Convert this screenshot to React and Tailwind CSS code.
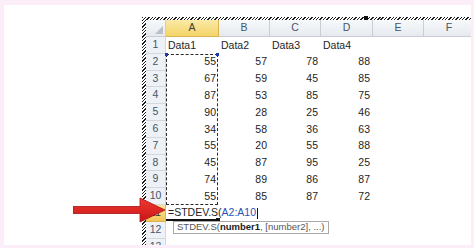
import React from 'react'

const hatch = 'bg-[repeating-linear-gradient(135deg,#1c1c1c_0px,#1c1c1c_1px,#ffffff_1px,#ffffff_2.4px)]'

const cols = ['A', 'B', 'C', 'D', 'E', 'F']

const data = [
  ['Data1', 'Data2', 'Data3', 'Data4'],
  [55, 57, 78, 88],
  [67, 59, 45, 85],
  [87, 53, 85, 75],
  [90, 28, 25, 46],
  [34, 58, 36, 63],
  [55, 20, 55, 88],
  [45, 87, 95, 25],
  [74, 89, 86, 87],
  [55, 85, 87, 72],
]

function HeaderCell({ children, active }) {
  return (
    <div
      className={
        'flex h-[17px] items-center justify-center border-r border-b text-[10.5px] ' +
        (active
          ? 'border-[#dcb352] bg-linear-to-b from-[#fbeaa6] to-[#f4d466] text-[#3c3c3c]'
          : 'border-[#c9ced6] bg-linear-to-b from-[#f7f9fb] to-[#e6eaef] text-[#44556b]')
      }
    >
      {children}
    </div>
  )
}

function RowHead({ n, active }) {
  return (
    <div
      className={
        'flex h-[16.8px] items-center justify-center border-r border-b text-[10.5px] ' +
        (active
          ? 'border-[#dcb352] bg-linear-to-b from-[#fbe79a] to-[#f2c553] text-[#333]'
          : 'border-[#d3d8df] bg-[#eef1f5] text-[#44556b]')
      }
    >
      {n}
    </div>
  )
}

function Cell({ value }) {
  const isText = typeof value === 'string'
  return (
    <div
      className={
        'flex h-[16.8px] items-center whitespace-nowrap text-[10.5px] text-[#1e1e1e] ' +
        (isText ? 'justify-start pl-[2px]' : 'justify-end pr-[3px]')
      }
    >
      {value}
    </div>
  )
}

export default function App() {
  return (
    <div
      className="h-[248px] w-[474px] bg-[#fbeef9] pt-[5px] pr-[3px] pb-[3px] pl-[4px]"
      style={{ fontFamily: '"Liberation Sans", Arial, sans-serif' }}
    >
      <div className="relative h-full overflow-hidden bg-white pt-[12px] pl-[138px]">
        <div className="flex h-full flex-col">
          <div className={`relative h-[3px] shrink-0 ${hatch}`}>
            <div className="absolute top-[-1px] left-[222px] h-[4px] w-[4px] bg-[#111]" />
          </div>
          <div className="flex flex-1 overflow-hidden">
            <div className={`w-[4px] shrink-0 ${hatch}`} />
            <div className="relative flex-1">
              <div className="grid grid-cols-[20px_53px_51px_51px_52px_51px_51px]">
                <div className="relative h-[17px] border-r border-b border-[#c9ced6] bg-linear-to-b from-[#f7f9fb] to-[#e6eaef]">
                  <svg className="absolute right-[2px] bottom-[2px]" width="8" height="8" viewBox="0 0 8 8">
                    <polygon points="8,0 8,8 0,8" fill="#b9c0c9" />
                  </svg>
                </div>
                {cols.map((c, i) => (
                  <HeaderCell key={c} active={i === 0}>{c}</HeaderCell>
                ))}

                {data.map((row, r) => (
                  <React.Fragment key={r}>
                    <RowHead n={r + 1} />
                    {row.map((v, ci) => (
                      <Cell key={ci} value={v} />
                    ))}
                    <div />
                    <div />
                  </React.Fragment>
                ))}

                <RowHead n={11} active />
                <div className="relative col-span-6 flex h-[16.8px] items-center pl-[2px] text-[10.5px] whitespace-nowrap text-[#1e1e1e]">
                  <span>=STDEV.S(</span>
                  <span className="text-[#2f4fb5]">A2:A10</span>
                  <span className="ml-[1px] inline-block h-[11px] w-[1px] bg-[#111]" />
                </div>

                <RowHead n={12} />
                <div className="col-span-6" />
                <RowHead n={13} />
                <div className="col-span-6" />
              </div>

              {/* copy marquee around A2:A10 */}
              <div className="absolute top-[33.8px] left-[20px] h-[151.2px] w-[52px] border border-dashed border-[#2a2a2a]">
                <div className="absolute top-[-2px] left-[-2px] h-[3px] w-[3px] bg-[#2038a8]" />
                <div className="absolute top-[-2px] right-[-2px] h-[3px] w-[3px] bg-[#2038a8]" />
              </div>

              {/* active cell bottom edge + fill handle */}
              <div className="absolute top-[199px] left-[20px] h-[2px] w-[52px] bg-[#111]" />
              <div className="absolute top-[198px] left-[70px] h-[4px] w-[4px] bg-[#111]" />

              {/* function tooltip */}
              <div className="absolute top-[201px] left-[27px] flex h-[13px] items-center border border-[#a9a9a9] bg-white px-[3px] text-[9.5px] whitespace-nowrap text-[#555]">
                STDEV.S(<span className="font-bold text-[#222]">number1</span>, [number2], ...)
              </div>
            </div>
          </div>
        </div>

        {/* red arrow */}
        <svg className="absolute top-[192px] left-[69px]" width="93" height="26" viewBox="0 0 93 26">
          <defs>
            <linearGradient id="ar" x1="0" y1="0" x2="0" y2="1">
              <stop offset="0" stopColor="#f03a2e" />
              <stop offset="1" stopColor="#c8141a" />
            </linearGradient>
          </defs>
          <polygon
            points="0,9.5 67,9.5 67,1 92,13 67,25 67,16.5 0,16.5"
            fill="url(#ar)"
            stroke="#a81218"
            strokeWidth="0.8"
          />
        </svg>
      </div>
    </div>
  )
}
